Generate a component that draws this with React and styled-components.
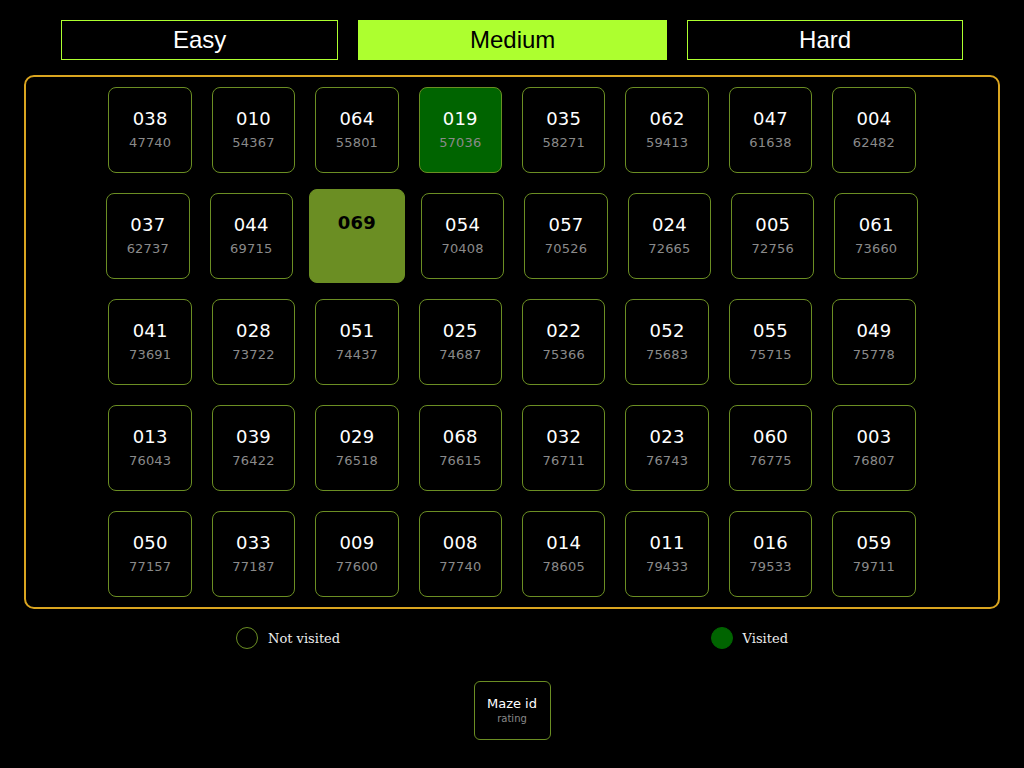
import React from "react";
import styled, { createGlobalStyle } from "styled-components";

const GlobalStyle = createGlobalStyle`
  html, body { margin: 0; padding: 0; background: #000; }
  body { font-family: "DejaVu Sans", sans-serif; color: #fff; }
  * { box-sizing: border-box; }
`;

const Page = styled.div`
  width: 1024px;
  min-height: 768px;
  background: #000;
  padding-top: 20px;
`;

const Tabs = styled.div`
  display: flex;
  gap: 20px;
  padding: 0 61px;
`;

const Tab = styled.button`
  flex: 1 1 auto;
  height: 40px;
  border: 1px solid #adff2f;
  background: ${(p) => (p.$active ? "#adff2f" : "#000")};
  color: ${(p) => (p.$active ? "#000" : "#fff")};
  font-family: "Liberation Sans", Arial, sans-serif;
  font-size: 24px;
  padding: 0;
  cursor: pointer;
`;

const Panel = styled.div`
  margin: 15px 24px 0;
  border: 2px solid #daa520;
  border-radius: 10px;
  display: flex;
  justify-content: center;
`;

const Grid = styled.div`
  width: 840px;
  display: flex;
  flex-wrap: wrap;
  justify-content: center;
  align-items: center;
`;

const Card = styled.div`
  width: 83.4px;
  height: 86px;
  margin: 10px;
  border: 1px solid #6b8e23;
  border-radius: 8px;
  background: ${(p) => (p.$visited ? "#006400" : "#000")};
  display: flex;
  flex-direction: column;
  align-items: center;
  padding-top: 20px;
`;

const SelectedCard = styled(Card)`
  width: 96px;
  height: 94px;
  margin: 6px;
  background: #6b8e23;
  padding-top: 22px;
`;

const Num = styled.div`
  font-size: 18px;
  line-height: 22px;
  color: ${(p) => (p.$selected ? "#000" : "#fff")};
  font-weight: ${(p) => (p.$selected ? 700 : 400)};
  letter-spacing: 0.2px;
`;

const Rating = styled.div`
  margin-top: 5px;
  font-size: 13px;
  line-height: 16px;
  color: #8a8a8a;
  letter-spacing: 0.2px;
`;

const Legend = styled.div`
  display: flex;
  justify-content: space-between;
  padding: 0 236px;
  margin-top: 18px;
`;

const LegendItem = styled.div`
  display: flex;
  align-items: center;
  gap: 10px;
  font-family: "DejaVu Serif", serif;
  font-size: 13px;
  color: #eee;
`;

const Dot = styled.span`
  width: 22px;
  height: 22px;
  border-radius: 50%;
  border: 1px solid ${(p) => (p.$filled ? "#006400" : "#6b8e23")};
  background: ${(p) => (p.$filled ? "#006400" : "transparent")};
`;

const KeyWrap = styled.div`
  display: flex;
  justify-content: center;
  margin-top: 32px;
`;

const KeyCard = styled.div`
  width: 77px;
  height: 59px;
  border: 1px solid #6b8e23;
  border-radius: 6px;
  display: flex;
  flex-direction: column;
  align-items: center;
  padding-top: 14px;
`;

const KeyTitle = styled.div`
  font-size: 13px;
  line-height: 16px;
  color: #fff;
`;

const KeySub = styled.div`
  font-size: 10px;
  line-height: 13px;
  color: #888;
`;

const rows = [
  ["038", "47740"], ["010", "54367"], ["064", "55801"], ["019", "57036", "v"],
  ["035", "58271"], ["062", "59413"], ["047", "61638"], ["004", "62482"],
  ["037", "62737"], ["044", "69715"], ["069", "", "s"], ["054", "70408"],
  ["057", "70526"], ["024", "72665"], ["005", "72756"], ["061", "73660"],
  ["041", "73691"], ["028", "73722"], ["051", "74437"], ["025", "74687"],
  ["022", "75366"], ["052", "75683"], ["055", "75715"], ["049", "75778"],
  ["013", "76043"], ["039", "76422"], ["029", "76518"], ["068", "76615"],
  ["032", "76711"], ["023", "76743"], ["060", "76775"], ["003", "76807"],
  ["050", "77157"], ["033", "77187"], ["009", "77600"], ["008", "77740"],
  ["014", "78605"], ["011", "79433"], ["016", "79533"], ["059", "79711"],
];

export default function App() {
  return (
    <>
      <GlobalStyle />
      <Page>
        <Tabs>
          <Tab>Easy</Tab>
          <Tab $active>Medium</Tab>
          <Tab>Hard</Tab>
        </Tabs>
        <Panel>
          <Grid>
            {rows.map(([id, rating, flag]) =>
              flag === "s" ? (
                <SelectedCard key={id}>
                  <Num $selected>{id}</Num>
                </SelectedCard>
              ) : (
                <Card key={id} $visited={flag === "v"}>
                  <Num>{id}</Num>
                  <Rating>{rating}</Rating>
                </Card>
              )
            )}
          </Grid>
        </Panel>
        <Legend>
          <LegendItem>
            <Dot />
            Not visited
          </LegendItem>
          <LegendItem>
            <Dot $filled />
            Visited
          </LegendItem>
        </Legend>
        <KeyWrap>
          <KeyCard>
            <KeyTitle>Maze id</KeyTitle>
            <KeySub>rating</KeySub>
          </KeyCard>
        </KeyWrap>
      </Page>
    </>
  );
}
